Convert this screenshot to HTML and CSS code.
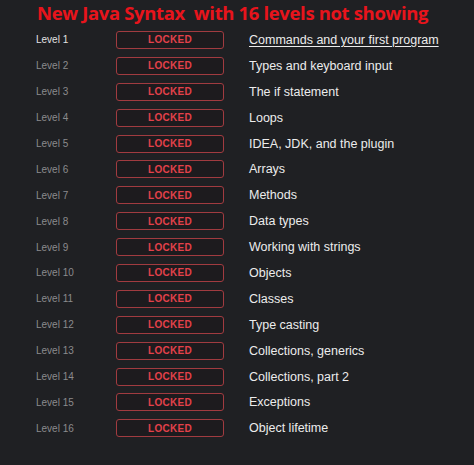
FILE: index.html
```html
<!DOCTYPE html>
<html lang="en">
<head>
    <meta charset="UTF-8">
    <meta name="viewport" content="width=device-width, initial-scale=1.0">
    <title>New Java Syntax</title>
    <link rel="stylesheet" href="styles.css">
</head>
<body>
    <h1 class="title">New Java Syntax&nbsp; with 16 levels not showing</h1>
    <ul class="levels">
        <li class="level current">
            <span class="level-name">Level 1</span>
            <span class="lock">LOCKED</span>
            <a class="topic" href="#">Commands and your first program</a>
        </li>
        <li class="level">
            <span class="level-name">Level 2</span>
            <span class="lock">LOCKED</span>
            <span class="topic">Types and keyboard input</span>
        </li>
        <li class="level">
            <span class="level-name">Level 3</span>
            <span class="lock">LOCKED</span>
            <span class="topic">The if statement</span>
        </li>
        <li class="level">
            <span class="level-name">Level 4</span>
            <span class="lock">LOCKED</span>
            <span class="topic">Loops</span>
        </li>
        <li class="level">
            <span class="level-name">Level 5</span>
            <span class="lock">LOCKED</span>
            <span class="topic">IDEA, JDK, and the plugin</span>
        </li>
        <li class="level">
            <span class="level-name">Level 6</span>
            <span class="lock">LOCKED</span>
            <span class="topic">Arrays</span>
        </li>
        <li class="level">
            <span class="level-name">Level 7</span>
            <span class="lock">LOCKED</span>
            <span class="topic">Methods</span>
        </li>
        <li class="level">
            <span class="level-name">Level 8</span>
            <span class="lock">LOCKED</span>
            <span class="topic">Data types</span>
        </li>
        <li class="level">
            <span class="level-name">Level 9</span>
            <span class="lock">LOCKED</span>
            <span class="topic">Working with strings</span>
        </li>
        <li class="level">
            <span class="level-name">Level 10</span>
            <span class="lock">LOCKED</span>
            <span class="topic">Objects</span>
        </li>
        <li class="level">
            <span class="level-name">Level 11</span>
            <span class="lock">LOCKED</span>
            <span class="topic">Classes</span>
        </li>
        <li class="level">
            <span class="level-name">Level 12</span>
            <span class="lock">LOCKED</span>
            <span class="topic">Type casting</span>
        </li>
        <li class="level">
            <span class="level-name">Level 13</span>
            <span class="lock">LOCKED</span>
            <span class="topic">Collections, generics</span>
        </li>
        <li class="level">
            <span class="level-name">Level 14</span>
            <span class="lock">LOCKED</span>
            <span class="topic">Collections, part 2</span>
        </li>
        <li class="level">
            <span class="level-name">Level 15</span>
            <span class="lock">LOCKED</span>
            <span class="topic">Exceptions</span>
        </li>
        <li class="level">
            <span class="level-name">Level 16</span>
            <span class="lock">LOCKED</span>
            <span class="topic">Object lifetime</span>
        </li>
    </ul>
</body>
</html>
```

FILE: styles.css
```css
/* Base */
* {
    margin: 0;
    padding: 0;
    box-sizing: border-box;
}

body {
    background-color: #1f2023;
    color: #e6e6e6;
    font-family: 'Liberation Sans', Arial, sans-serif;
    width: 474px;
    height: 465px;
    overflow: hidden;
}

/* Title */
.title {
    font-family: 'Open Sans', sans-serif;
    font-size: 18.5px;
    font-weight: 700;
    color: #e8141c;
    line-height: 25px;
    padding-left: 37px;
    white-space: nowrap;
    letter-spacing: -0.35px;
}

/* Level list */
.levels {
    list-style: none;
    padding: 2px 0 0 36px;
}

.level {
    display: flex;
    align-items: center;
    height: 25.9px;
}

.level-name {
    width: 80px;
    font-size: 10px;
    color: #8b8b8d;
}

.current .level-name {
    color: #e2e2e2;
}

.lock {
    width: 108px;
    height: 18px;
    border: 1px solid #a13b40;
    border-radius: 3px;
    background-color: #1d1b1e;
    color: #e2414a;
    font-size: 10px;
    font-weight: 700;
    letter-spacing: 0.3px;
    display: flex;
    align-items: center;
    justify-content: center;
}

.topic {
    margin-left: 25px;
    font-size: 12.5px;
    color: #ececec;
    white-space: nowrap;
}

a.topic {
    color: #ececec;
    text-decoration: underline;
    text-underline-offset: 2px;
}
```
